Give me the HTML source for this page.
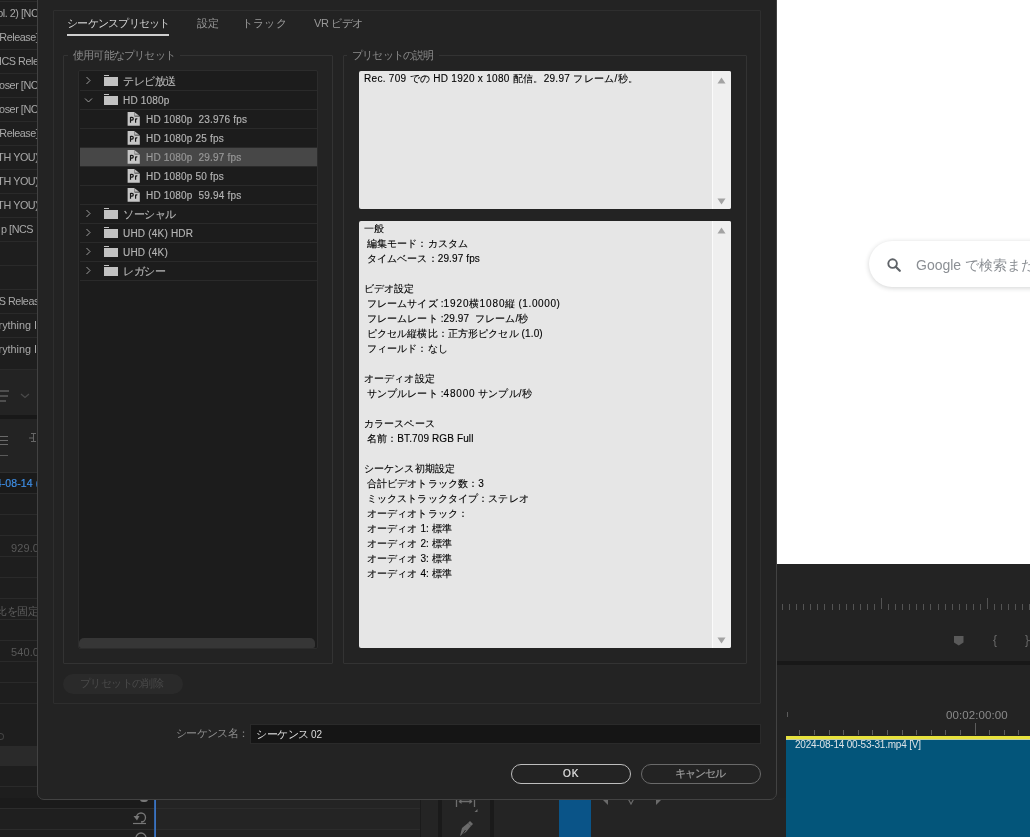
<!DOCTYPE html>
<html><head><meta charset="utf-8">
<style>
*{box-sizing:border-box;margin:0;padding:0}
html,body{width:1030px;height:837px;overflow:hidden;background:#1d1d1d;font-family:"Liberation Sans",sans-serif;position:relative}
.t,.tx,.lbl{will-change:transform}
.a{position:absolute}
.t{position:absolute;white-space:pre;line-height:1}
/* left strip */
#ls{left:0;top:0;width:37px;height:800px;overflow:hidden;background:#1e1e1e}
#ls .ln{position:absolute;left:0;width:38px;height:1px;background:#2a2a2a}
#ls .tx{position:absolute;right:-6px;font-size:10.8px;letter-spacing:-0.45px;color:#a9a9a9;white-space:pre;line-height:14px}
/* right side */
#wh{left:776px;top:0;width:254px;height:564px;background:#fff;overflow:hidden}
#rp1{left:776px;top:564px;width:254px;height:97px;background:#232323}
#band{left:776px;top:661px;width:254px;height:4px;background:#181818}
#rp2{left:776px;top:665px;width:254px;height:172px;background:#232323;overflow:hidden}
/* bottom strip */
#bs{left:0;top:798px;width:786px;height:39px;background:#242424;overflow:hidden}
/* dialog */
#dlg{left:37px;top:-20px;width:740px;height:820px;background:#232323;border:1px solid #424242;border-radius:0 0 7px 7px}
.box{position:absolute;border:1px solid #333;border-radius:1px}
.lbl{position:absolute;background:#232323;padding:0 5px;color:#8c8c8c;font-size:11px;letter-spacing:-0.8px;line-height:14px;white-space:pre}
.tr{font-size:10px;letter-spacing:0.2px;color:#b4b4b4;line-height:14px;-webkit-text-stroke:0.15px #b4b4b4}
.dt{font-size:10px;letter-spacing:0.12px;color:#000;line-height:14px;-webkit-text-stroke:0.12px #000}
</style></head><body>

<div id="ls" class="a"><div class="ln" style="top:1px"></div><div class="ln" style="top:25px"></div><div class="ln" style="top:49px"></div><div class="ln" style="top:73px"></div><div class="ln" style="top:97px"></div><div class="ln" style="top:121px"></div><div class="ln" style="top:145px"></div><div class="ln" style="top:169px"></div><div class="ln" style="top:193px"></div><div class="ln" style="top:217px"></div><div class="ln" style="top:241px"></div><div class="ln" style="top:265px"></div><div class="ln" style="top:289px"></div><div class="ln" style="top:313px"></div><div class="ln" style="top:337px"></div><div class="tx" style="right:-1px;top:6px">Vol. 2) [NC</div><div class="tx" style="right:-1px;top:30px">S Release]</div><div class="tx" style="right:-2px;top:54px"> [NCS Rele</div><div class="tx" style="right:-1px;top:78px">mposer [NC</div><div class="tx" style="right:-1px;top:102px">mposer [NC</div><div class="tx" style="right:-1px;top:126px">S Release]</div><div class="tx" style="right:-1px;top:150px">WITH YOU)</div><div class="tx" style="right:-1px;top:174px">WITH YOU)</div><div class="tx" style="right:-1px;top:198px">WITH YOU)</div><div class="tx" style="right:4px;top:222px">p [NCS</div><div class="tx" style="right:-2px;top:294px">NCS Releas</div><div class="tx" style="right:0px;top:318px;letter-spacing:0">Everything I</div><div class="tx" style="right:0px;top:342px;letter-spacing:0">Everything I</div><div class="ln" style="top:369px"></div><div class="a" style="left:0;top:370px;width:38px;height:45px;background:#232323"></div><div class="a" style="left:0;top:390px;width:9px;height:2px;background:#4e4e4e"></div><div class="a" style="left:0;top:395px;width:8px;height:2px;background:#4e4e4e"></div><div class="a" style="left:0;top:400px;width:6px;height:2px;background:#4e4e4e"></div><svg class="a" style="left:20px;top:393px" width="10" height="6"><path d="M1 1 L5 4.5 L9 1" fill="none" stroke="#4a4a4a" stroke-width="1.2"/></svg><div class="a" style="left:0;top:415px;width:38px;height:4px;background:#181818"></div><div class="a" style="left:0;top:419px;width:38px;height:54px;background:#232323"></div><div class="a" style="left:0;top:436px;width:8px;height:1px;background:#6a6a6a"></div><div class="a" style="left:0;top:440px;width:8px;height:1px;background:#6a6a6a"></div><div class="a" style="left:0;top:444px;width:8px;height:1px;background:#6a6a6a"></div><div class="a" style="left:0;top:455px;width:8px;height:1px;background:#5a5a5a"></div><svg class="a" style="left:29px;top:433px" width="9" height="9"><path d="M2 0.5 H7 M4.5 0.5 V8.5 M2 8.5 H7 M0 5 H4" fill="none" stroke="#666" stroke-width="1"/></svg><div class="ln" style="top:472px;background:#2e2e2e"></div><div class="a" style="left:0;top:473px;width:38px;height:20px;background:#1a1a1a"></div><div class="tx" style="right:-2px;top:476px;font-size:10.5px;letter-spacing:0.1px;-webkit-text-stroke:0.2px #3f8fe6;color:#3f8fe6">2024-08-14 (</div><div class="ln" style="top:493px"></div><div class="ln" style="top:514px"></div><div class="ln" style="top:535px"></div><div class="ln" style="top:556px"></div><div class="ln" style="top:577px"></div><div class="ln" style="top:598px"></div><div class="ln" style="top:619px"></div><div class="ln" style="top:640px"></div><div class="ln" style="top:661px"></div><div class="ln" style="top:682px"></div><div class="ln" style="top:703px"></div><div class="tx" style="right:-2px;top:541px;font-size:11px;letter-spacing:0.1px;color:#595959">929.0</div><div class="tx" style="right:-1px;top:604px;font-size:11px;color:#5e5e5e">比を固定</div><div class="tx" style="right:-2px;top:645px;font-size:11px;letter-spacing:0.1px;color:#595959">540.0</div><div class="a" style="left:0;top:733px;width:4px;height:7px;border:1px solid #444;border-left:none;border-radius:0 4px 4px 0"></div><div class="ln" style="top:746px"></div><div class="a" style="left:0;top:747px;width:38px;height:18px;background:#2a2a2a"></div><div class="ln" style="top:765px"></div><div class="ln" style="top:786px"></div></div>
<div id="wh" class="a"><div class="a" style="left:93px;top:241px;width:260px;height:46px;border-radius:23px;background:#fff;box-shadow:0 1px 5px rgba(32,33,36,0.2)"></div><svg class="a" style="left:111px;top:258px" width="14" height="14"><circle cx="5.6" cy="5.6" r="4.3" fill="none" stroke="#5f6368" stroke-width="1.9"/><path d="M8.7 8.7 L12.8 12.8" stroke="#5f6368" stroke-width="2.2" stroke-linecap="round"/></svg><div class="t" style="left:140px;top:258px;font-size:14px;color:#8b8f94">Google で検索また</div></div>
<div id="rp1" class="a"><div class="a" style="left:6px;top:40px;width:1px;height:6px;background:#535353"></div><div class="a" style="left:13px;top:40px;width:1px;height:6px;background:#535353"></div><div class="a" style="left:20px;top:40px;width:1px;height:6px;background:#535353"></div><div class="a" style="left:27px;top:40px;width:1px;height:6px;background:#535353"></div><div class="a" style="left:34px;top:40px;width:1px;height:6px;background:#535353"></div><div class="a" style="left:41px;top:40px;width:1px;height:6px;background:#535353"></div><div class="a" style="left:48px;top:40px;width:1px;height:6px;background:#535353"></div><div class="a" style="left:56px;top:40px;width:1px;height:6px;background:#535353"></div><div class="a" style="left:63px;top:40px;width:1px;height:6px;background:#535353"></div><div class="a" style="left:70px;top:40px;width:1px;height:6px;background:#535353"></div><div class="a" style="left:77px;top:40px;width:1px;height:6px;background:#535353"></div><div class="a" style="left:84px;top:40px;width:1px;height:6px;background:#535353"></div><div class="a" style="left:91px;top:40px;width:1px;height:6px;background:#535353"></div><div class="a" style="left:98px;top:40px;width:1px;height:6px;background:#535353"></div><div class="a" style="left:105px;top:34px;width:1px;height:11px;background:#535353"></div><div class="a" style="left:112px;top:40px;width:1px;height:6px;background:#535353"></div><div class="a" style="left:119px;top:40px;width:1px;height:6px;background:#535353"></div><div class="a" style="left:126px;top:40px;width:1px;height:6px;background:#535353"></div><div class="a" style="left:133px;top:40px;width:1px;height:6px;background:#535353"></div><div class="a" style="left:140px;top:40px;width:1px;height:6px;background:#535353"></div><div class="a" style="left:147px;top:40px;width:1px;height:6px;background:#535353"></div><div class="a" style="left:154px;top:40px;width:1px;height:6px;background:#535353"></div><div class="a" style="left:162px;top:40px;width:1px;height:6px;background:#535353"></div><div class="a" style="left:169px;top:40px;width:1px;height:6px;background:#535353"></div><div class="a" style="left:176px;top:40px;width:1px;height:6px;background:#535353"></div><div class="a" style="left:183px;top:40px;width:1px;height:6px;background:#535353"></div><div class="a" style="left:190px;top:40px;width:1px;height:6px;background:#535353"></div><div class="a" style="left:197px;top:40px;width:1px;height:6px;background:#535353"></div><div class="a" style="left:204px;top:40px;width:1px;height:6px;background:#535353"></div><div class="a" style="left:211px;top:34px;width:1px;height:11px;background:#535353"></div><div class="a" style="left:218px;top:40px;width:1px;height:6px;background:#535353"></div><div class="a" style="left:225px;top:40px;width:1px;height:6px;background:#535353"></div><div class="a" style="left:232px;top:40px;width:1px;height:6px;background:#535353"></div><div class="a" style="left:239px;top:40px;width:1px;height:6px;background:#535353"></div><div class="a" style="left:246px;top:40px;width:1px;height:6px;background:#535353"></div><div class="a" style="left:253px;top:40px;width:1px;height:6px;background:#535353"></div><svg class="a" style="left:178px;top:72px" width="10" height="10"><path d="M0 0 H9.5 V6.5 L4.75 9.5 L0 6.5 Z" fill="#5a5a5a"/></svg><div class="t" style="left:217px;top:70px;font-size:12px;color:#6a6a6a">{</div><div class="t" style="left:249px;top:70px;font-size:12px;color:#6a6a6a">}{</div></div>
<div id="band" class="a"></div>
<div id="rp2" class="a"><div class="a" style="left:23.3px;top:65px;width:1px;height:5px;background:#5c5c5c"></div><div class="a" style="left:37.9px;top:65px;width:1px;height:5px;background:#5c5c5c"></div><div class="a" style="left:52.5px;top:65px;width:1px;height:5px;background:#5c5c5c"></div><div class="a" style="left:67.1px;top:65px;width:1px;height:5px;background:#5c5c5c"></div><div class="a" style="left:81.7px;top:65px;width:1px;height:5px;background:#5c5c5c"></div><div class="a" style="left:96.3px;top:65px;width:1px;height:5px;background:#5c5c5c"></div><div class="a" style="left:110.9px;top:65px;width:1px;height:5px;background:#5c5c5c"></div><div class="a" style="left:125.5px;top:65px;width:1px;height:5px;background:#5c5c5c"></div><div class="a" style="left:140.1px;top:65px;width:1px;height:5px;background:#5c5c5c"></div><div class="a" style="left:154.7px;top:65px;width:1px;height:5px;background:#5c5c5c"></div><div class="a" style="left:169.3px;top:65px;width:1px;height:5px;background:#5c5c5c"></div><div class="a" style="left:183.9px;top:65px;width:1px;height:5px;background:#5c5c5c"></div><div class="a" style="left:198.5px;top:58px;width:1px;height:12px;background:#5c5c5c"></div><div class="a" style="left:213.1px;top:65px;width:1px;height:5px;background:#5c5c5c"></div><div class="a" style="left:227.7px;top:65px;width:1px;height:5px;background:#5c5c5c"></div><div class="a" style="left:242.3px;top:65px;width:1px;height:5px;background:#5c5c5c"></div><div class="a" style="left:11px;top:47px;width:1px;height:5px;background:#5c5c5c"></div><div class="t" style="left:170px;top:45px;font-size:11.5px;letter-spacing:0.1px;color:#8a8a8a">00:02:00:00</div><div class="a" style="left:10px;top:71px;width:244px;height:3px;background:#e7e23c"></div><div class="a" style="left:10px;top:74px;width:244px;height:1px;background:#c8d0a0"></div><div class="a" style="left:10px;top:75px;width:244px;height:97px;background:#03557a"></div><div class="t" style="left:19px;top:75px;font-size:10px;letter-spacing:-0.2px;color:#dde3e6">2024-08-14 00-53-31.mp4 [V]</div></div>
<div id="bs" class="a"><div class="a" style="left:0;top:0;width:155px;height:10px;background:#1b1b1b"></div><div class="a" style="left:0;top:10px;width:420px;height:1px;background:#2c2c2c"></div><div class="a" style="left:0;top:11px;width:155px;height:20px;background:#1f1f1f"></div><div class="a" style="left:0;top:31px;width:420px;height:1px;background:#2c2c2c"></div><div class="a" style="left:0;top:32px;width:155px;height:7px;background:#1f1f1f"></div><svg class="a" style="left:132px;top:13px" width="16" height="14"><path d="M4.5 6.5 A4.5 4.5 0 1 1 9 11" fill="none" stroke="#777" stroke-width="1.3"/><path d="M1.5 5 L5 9.5 L7.5 5 Z" fill="#777"/><path d="M1 12.5 H14" stroke="#777" stroke-width="1.2"/></svg><div class="a" style="left:140px;top:1px;width:8px;height:3px;background:#777;border-radius:0 0 4px 4px"></div><svg class="a" style="left:135px;top:34px" width="12" height="6"><path d="M1 6 A5 5 0 0 1 11 6" fill="none" stroke="#777" stroke-width="1.3"/></svg><div class="a" style="left:154px;top:0;width:2px;height:39px;background:linear-gradient(90deg,#2f5e9e,#3f7acb)"></div><div class="a" style="left:420px;top:0;width:1px;height:39px;background:#1b1b1b"></div><div class="a" style="left:438px;top:0;width:4px;height:39px;background:#1a1a1a"></div><div class="a" style="left:490px;top:0;width:4px;height:39px;background:#1a1a1a"></div><svg class="a" style="left:455px;top:0" width="24" height="16"><path d="M1.5 0 V9 M19.5 0 V9 M4 3.5 H17" fill="none" stroke="#6e6e6e" stroke-width="1.3"/><path d="M3.5 3.5 L6.5 1 V6 Z M17.5 3.5 L14.5 1 V6 Z" fill="#6e6e6e"/><path d="M22.5 11 V14 H19.5 Z" fill="#6e6e6e"/></svg><svg class="a" style="left:457px;top:21px" width="18" height="18"><path d="M3 17 L5 9 L11 4 L14 7 L9 13 Z" fill="#6a6a6a"/><path d="M11 4 L13 2 L16 5 L14 7 Z" fill="#6a6a6a"/><path d="M5 16 L8.5 11" stroke="#232323" stroke-width="1"/></svg><div class="a" style="left:559px;top:0;width:32px;height:39px;background:#0a5488"></div><svg class="a" style="left:601px;top:0" width="8" height="7"><path d="M0 0 H7 V7 Z" fill="#6a6a6a"/></svg><svg class="a" style="left:627px;top:0" width="8" height="7"><path d="M1 0.5 L4 6 L7 0.5" fill="none" stroke="#6a6a6a" stroke-width="1.2"/></svg><svg class="a" style="left:656px;top:0" width="8" height="7"><path d="M0 0 H7 L0 7 Z" fill="#6a6a6a"/></svg></div>

<div id="dlg" class="a"></div>
<!-- tab panel -->
<div class="box" style="left:53px;top:10px;width:708px;height:694px;border-color:#2e2e2e"></div>
<div class="t" style="left:67px;top:18px;font-size:11px;letter-spacing:-0.75px;color:#d4d4d4">シーケンスプリセット</div>
<div class="a" style="left:67px;top:34px;width:102px;height:2px;background:#cfcfcf"></div>
<div class="t" style="left:197px;top:18px;font-size:11px;letter-spacing:-0.5px;color:#9a9a9a">設定</div>
<div class="t" style="left:242px;top:18px;font-size:11px;letter-spacing:0.2px;color:#9a9a9a">トラック</div>
<div class="t" style="left:314px;top:18px;font-size:11px;letter-spacing:-0.4px;color:#9a9a9a">VR ビデオ</div>

<!-- left group -->
<div class="box" style="left:63px;top:55px;width:270px;height:609px"></div>
<div class="lbl" style="left:68px;top:48px">使用可能なプリセット</div>
<div class="a" id="tree" style="left:78px;top:70px;width:240px;height:579px;background:#1c1c1c;border:1px solid #2c2c2c;border-radius:2px;overflow:hidden"><div class="a" style="left:1px;top:1px;width:237px;height:576px">
<div class="a" style="left:0;top:0px;width:237px;height:19px;border-bottom:1px solid #2a2a2a"></div>
<svg class="a" style="left:4px;top:4px" width="8" height="9"><path d="M2.5 1 L6 4.5 L2.5 8" fill="none" stroke="#9e9e9e" stroke-width="1"/></svg>
<div class="a" style="left:24px;top:3px;width:5px;height:1px;background:#c2c2c2"></div>
<div class="a" style="left:24px;top:5px;width:14px;height:9px;background:#c2c2c2"></div>
<div class="t tr" style="left:43px;top:3px"><span style="font-size:10.6px;letter-spacing:-0.4px;position:relative;top:-1px">テレビ放送</span></div>
<div class="a" style="left:0;top:19px;width:237px;height:19px;border-bottom:1px solid #2a2a2a"></div>
<svg class="a" style="left:4px;top:25px" width="9" height="7"><path d="M1 1.5 L4.5 5 L8 1.5" fill="none" stroke="#9e9e9e" stroke-width="1"/></svg>
<div class="a" style="left:24px;top:22px;width:5px;height:1px;background:#c2c2c2"></div>
<div class="a" style="left:24px;top:24px;width:14px;height:9px;background:#c2c2c2"></div>
<div class="t tr" style="left:43px;top:22px">HD 1080p</div>
<div class="a" style="left:0;top:38px;width:237px;height:19px;border-bottom:1px solid #2a2a2a"></div>
<svg class="a" style="left:47px;top:40px" width="13" height="14"><path d="M0.6 0 H7.5 V4.6 H12.8 V13.8 H0.6 Z" fill="#c6c6c6"/><path d="M7.6 0.2 L12.2 3.8 H7.6 Z" fill="#bcbcbc"/><path d="M3.5 10.8 V5 M3.5 5.4 H5 C6.7 5.4 6.7 8.1 5 8.1 H3.5 M8.6 6.6 V10.8 M8.6 7.9 C9 6.9 9.6 6.6 10.3 6.6" fill="none" stroke="#161616" stroke-width="1.2"/></svg>
<div class="t tr" style="left:66px;top:41px;">HD 1080p&nbsp; 23.976 fps</div>
<div class="a" style="left:0;top:57px;width:237px;height:19px;border-bottom:1px solid #2a2a2a"></div>
<svg class="a" style="left:47px;top:59px" width="13" height="14"><path d="M0.6 0 H7.5 V4.6 H12.8 V13.8 H0.6 Z" fill="#c6c6c6"/><path d="M7.6 0.2 L12.2 3.8 H7.6 Z" fill="#bcbcbc"/><path d="M3.5 10.8 V5 M3.5 5.4 H5 C6.7 5.4 6.7 8.1 5 8.1 H3.5 M8.6 6.6 V10.8 M8.6 7.9 C9 6.9 9.6 6.6 10.3 6.6" fill="none" stroke="#161616" stroke-width="1.2"/></svg>
<div class="t tr" style="left:66px;top:60px;">HD 1080p 25 fps</div>
<div class="a" style="left:0;top:76px;width:237px;height:19px;background:#474747;border-bottom:1px solid #2a2a2a"></div>
<svg class="a" style="left:47px;top:78px" width="13" height="14"><path d="M0.6 0 H7.5 V4.6 H12.8 V13.8 H0.6 Z" fill="#c6c6c6"/><path d="M7.6 0.2 L12.2 3.8 H7.6 Z" fill="#bcbcbc"/><path d="M3.5 10.8 V5 M3.5 5.4 H5 C6.7 5.4 6.7 8.1 5 8.1 H3.5 M8.6 6.6 V10.8 M8.6 7.9 C9 6.9 9.6 6.6 10.3 6.6" fill="none" stroke="#161616" stroke-width="1.2"/></svg>
<div class="t tr" style="left:66px;top:79px;color:#8e8e8e;">HD 1080p&nbsp; 29.97 fps</div>
<div class="a" style="left:0;top:95px;width:237px;height:19px;border-bottom:1px solid #2a2a2a"></div>
<svg class="a" style="left:47px;top:97px" width="13" height="14"><path d="M0.6 0 H7.5 V4.6 H12.8 V13.8 H0.6 Z" fill="#c6c6c6"/><path d="M7.6 0.2 L12.2 3.8 H7.6 Z" fill="#bcbcbc"/><path d="M3.5 10.8 V5 M3.5 5.4 H5 C6.7 5.4 6.7 8.1 5 8.1 H3.5 M8.6 6.6 V10.8 M8.6 7.9 C9 6.9 9.6 6.6 10.3 6.6" fill="none" stroke="#161616" stroke-width="1.2"/></svg>
<div class="t tr" style="left:66px;top:98px;">HD 1080p 50 fps</div>
<div class="a" style="left:0;top:114px;width:237px;height:19px;border-bottom:1px solid #2a2a2a"></div>
<svg class="a" style="left:47px;top:116px" width="13" height="14"><path d="M0.6 0 H7.5 V4.6 H12.8 V13.8 H0.6 Z" fill="#c6c6c6"/><path d="M7.6 0.2 L12.2 3.8 H7.6 Z" fill="#bcbcbc"/><path d="M3.5 10.8 V5 M3.5 5.4 H5 C6.7 5.4 6.7 8.1 5 8.1 H3.5 M8.6 6.6 V10.8 M8.6 7.9 C9 6.9 9.6 6.6 10.3 6.6" fill="none" stroke="#161616" stroke-width="1.2"/></svg>
<div class="t tr" style="left:66px;top:117px;">HD 1080p&nbsp; 59.94 fps</div>
<div class="a" style="left:0;top:133px;width:237px;height:19px;border-bottom:1px solid #2a2a2a"></div>
<svg class="a" style="left:4px;top:137px" width="8" height="9"><path d="M2.5 1 L6 4.5 L2.5 8" fill="none" stroke="#9e9e9e" stroke-width="1"/></svg>
<div class="a" style="left:24px;top:136px;width:5px;height:1px;background:#c2c2c2"></div>
<div class="a" style="left:24px;top:138px;width:14px;height:9px;background:#c2c2c2"></div>
<div class="t tr" style="left:43px;top:136px"><span style="font-size:10.6px;letter-spacing:-0.4px;position:relative;top:-1px">ソーシャル</span></div>
<div class="a" style="left:0;top:152px;width:237px;height:19px;border-bottom:1px solid #2a2a2a"></div>
<svg class="a" style="left:4px;top:156px" width="8" height="9"><path d="M2.5 1 L6 4.5 L2.5 8" fill="none" stroke="#9e9e9e" stroke-width="1"/></svg>
<div class="a" style="left:24px;top:155px;width:5px;height:1px;background:#c2c2c2"></div>
<div class="a" style="left:24px;top:157px;width:14px;height:9px;background:#c2c2c2"></div>
<div class="t tr" style="left:43px;top:155px">UHD (4K) HDR</div>
<div class="a" style="left:0;top:171px;width:237px;height:19px;border-bottom:1px solid #2a2a2a"></div>
<svg class="a" style="left:4px;top:175px" width="8" height="9"><path d="M2.5 1 L6 4.5 L2.5 8" fill="none" stroke="#9e9e9e" stroke-width="1"/></svg>
<div class="a" style="left:24px;top:174px;width:5px;height:1px;background:#c2c2c2"></div>
<div class="a" style="left:24px;top:176px;width:14px;height:9px;background:#c2c2c2"></div>
<div class="t tr" style="left:43px;top:174px">UHD (4K)</div>
<div class="a" style="left:0;top:190px;width:237px;height:19px;border-bottom:1px solid #2a2a2a"></div>
<svg class="a" style="left:4px;top:194px" width="8" height="9"><path d="M2.5 1 L6 4.5 L2.5 8" fill="none" stroke="#9e9e9e" stroke-width="1"/></svg>
<div class="a" style="left:24px;top:193px;width:5px;height:1px;background:#c2c2c2"></div>
<div class="a" style="left:24px;top:195px;width:14px;height:9px;background:#c2c2c2"></div>
<div class="t tr" style="left:43px;top:193px"><span style="font-size:10.6px;letter-spacing:-0.4px;position:relative;top:-1px">レガシー</span></div>
</div></div>
<div class="a" style="left:79px;top:638px;width:236px;height:10px;background:#363636;border-radius:5px 5px 2px 2px"></div>

<!-- right group -->
<div class="box" style="left:343px;top:55px;width:404px;height:609px"></div>
<div class="lbl" style="left:347px;top:48px">プリセットの説明</div>
<div class="a" style="left:359px;top:71px;width:372px;height:138px;background:#e6e6e6;border-radius:2px;overflow:hidden"><div class="a" style="right:0;top:0;width:19px;height:138px;background:#efefef;border-left:1px solid #fafafa"></div><svg class="a" style="right:5px;top:6px" width="9" height="7"><path d="M0.5 6.5 L4.5 0.5 L8.5 6.5 Z" fill="#a3a3a3"/></svg><svg class="a" style="right:5px;top:127px" width="9" height="7"><path d="M0.5 0.5 L4.5 6.5 L8.5 0.5 Z" fill="#a3a3a3"/></svg><div class="t dt" style="left:5px;top:1px;letter-spacing:0.3px">Rec. 709 での HD 1920 x 1080 配信。29.97 フレーム/秒。</div></div>
<div class="a" style="left:359px;top:221px;width:372px;height:427px;background:#e6e6e6;border-radius:2px;overflow:hidden"><div class="a" style="right:0;top:0;width:19px;height:427px;background:#efefef;border-left:1px solid #fafafa"></div><svg class="a" style="right:5px;top:6px" width="9" height="7"><path d="M0.5 6.5 L4.5 0.5 L8.5 6.5 Z" fill="#a3a3a3"/></svg><svg class="a" style="right:5px;top:416px" width="9" height="7"><path d="M0.5 0.5 L4.5 6.5 L8.5 0.5 Z" fill="#a3a3a3"/></svg><div class="t dt" style="left:5px;top:1px">一般</div><div class="t dt" style="left:5px;top:16px"> 編集モード：カスタム</div><div class="t dt" style="left:5px;top:31px"> タイムベース：29.97 fps</div><div class="t dt" style="left:5px;top:61px">ビデオ設定</div><div class="t dt" style="left:5px;top:76px"> フレームサイズ :<span style="letter-spacing:0.9px">1920</span>横<span style="letter-spacing:0.9px">1080</span>縦 <span style="letter-spacing:0.6px">(1.0000)</span></div><div class="t dt" style="left:5px;top:91px"> フレームレート :29.97&nbsp; フレーム/秒</div><div class="t dt" style="left:5px;top:106px"> ピクセル縦横比：正方形ピクセル (1.0)</div><div class="t dt" style="left:5px;top:121px"> フィールド：なし</div><div class="t dt" style="left:5px;top:151px">オーディオ設定</div><div class="t dt" style="left:5px;top:166px"> サンプルレート :<span style="letter-spacing:0.8px">48000</span> サンプル/秒</div><div class="t dt" style="left:5px;top:196px">カラースペース</div><div class="t dt" style="left:5px;top:211px"> 名前：BT.709 RGB Full</div><div class="t dt" style="left:5px;top:241px">シーケンス初期設定</div><div class="t dt" style="left:5px;top:256px"> 合計ビデオトラック数：3</div><div class="t dt" style="left:5px;top:271px"> ミックストラックタイプ：ステレオ</div><div class="t dt" style="left:5px;top:286px"> オーディオトラック：</div><div class="t dt" style="left:5px;top:301px"> オーディオ 1: 標準</div><div class="t dt" style="left:5px;top:316px"> オーディオ 2: 標準</div><div class="t dt" style="left:5px;top:331px"> オーディオ 3: 標準</div><div class="t dt" style="left:5px;top:346px"> オーディオ 4: 標準</div></div>

<!-- delete button -->
<div class="a" style="left:63px;top:674px;width:120px;height:20px;border-radius:10px;background:#2a2a2a"></div>
<div class="t" style="left:80px;top:678px;font-size:11px;letter-spacing:-0.6px;color:#4a4a4a">プリセットの削除</div>

<!-- name -->
<div class="t" style="left:176px;top:728px;font-size:11px;letter-spacing:-0.65px;color:#8c8c8c">シーケンス名：</div>
<div class="a" style="left:250px;top:724px;width:511px;height:20px;background:#151515;border:1px solid #2a2a2a"></div>
<div class="t" style="left:256px;top:729px;font-size:11px;letter-spacing:-0.5px;color:#dcdcdc">シーケンス <span style="font-size:10px;letter-spacing:0">02</span></div>

<!-- buttons -->
<div class="a" style="left:511px;top:764px;width:120px;height:20px;border:1.5px solid #bdbdbd;border-radius:10px"></div>
<div class="t" style="left:563px;top:769px;font-size:10px;letter-spacing:1px;-webkit-text-stroke:0.2px #e0e0e0;color:#e0e0e0">OK</div>
<div class="a" style="left:641px;top:764px;width:120px;height:20px;border:1.5px solid #6a6a6a;border-radius:10px"></div>
<div class="t" style="left:675px;top:768px;font-size:11px;letter-spacing:-0.9px;-webkit-text-stroke:0.2px #9a9a9a;color:#9a9a9a">キャンセル</div>

</body></html>
